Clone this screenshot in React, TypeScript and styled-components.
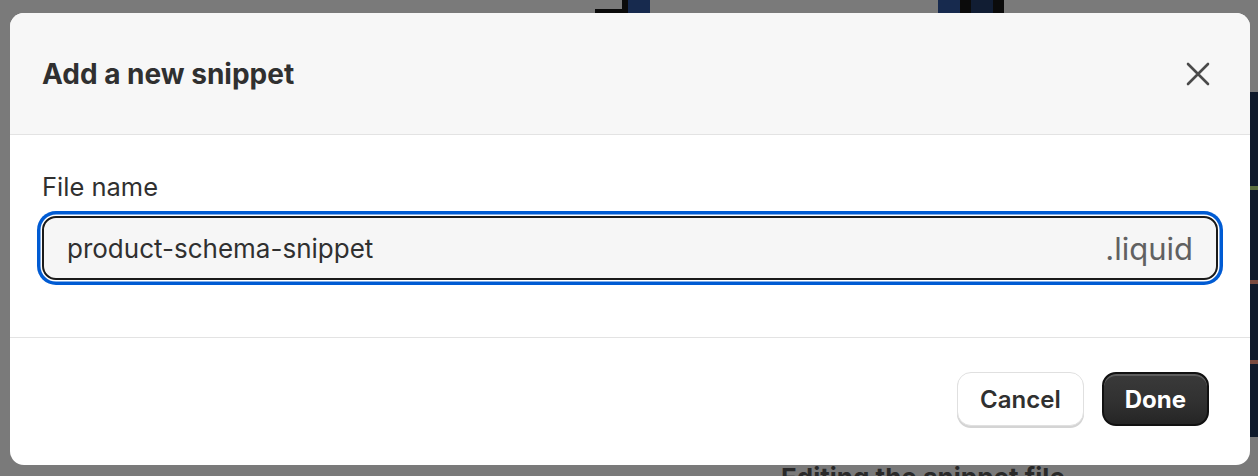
import React from "react";
import styled, { createGlobalStyle } from "styled-components";

const Global = createGlobalStyle`
  html, body { margin: 0; padding: 0; }
  body {
    font-family: Inter, "Noto Sans", "Liberation Sans", sans-serif;
    background: #7a7a7a;
    -webkit-font-smoothing: antialiased;
  }
`;

const Backdrop = styled.div`
  position: relative;
  width: 1258px;
  height: 476px;
  overflow: hidden;
  background: #7a7a7a;
  box-sizing: border-box;
  padding: 13px 8px 11px 10px;
`;

const PageBehind = styled.svg`
  position: absolute;
  inset: 0;
`;

const BackText = styled.div`
  position: absolute;
  left: 781px;
  top: 462px;
  font-size: 26px;
  font-weight: 700;
  color: #1c1c1c;
  white-space: nowrap;
  opacity: 0.85;
`;

const Modal = styled.div`
  position: relative;
  width: 1240px;
  height: 452px;
  background: #ffffff;
  border-radius: 14px;
  overflow: hidden;
  display: flex;
  flex-direction: column;
`;

const Header = styled.div`
  height: 121px;
  background: #f7f7f7;
  border-bottom: 1px solid #e3e3e3;
  display: flex;
  align-items: center;
  justify-content: space-between;
  padding: 0 38px 0 32px;
  flex-shrink: 0;
`;

const Title = styled.h2`
  margin: 0;
  font-size: 28px;
  font-weight: 650;
  color: #303030;
`;

const CloseBtn = styled.button`
  border: 0;
  background: transparent;
  padding: 0;
  width: 28px;
  height: 28px;
  display: flex;
  align-items: center;
  justify-content: center;
  cursor: pointer;
`;

const Body = styled.div`
  padding: 36px 32px 0 32px;
  height: 203px;
  box-sizing: border-box;
  border-bottom: 1px solid #e3e3e3;
  display: flex;
  flex-direction: column;
  flex-shrink: 0;
`;

const Label = styled.label`
  font-size: 25.5px;
  line-height: 32px;
  color: #303030;
  margin-bottom: 13px;
`;

const Field = styled.div`
  height: 64px;
  box-sizing: border-box;
  border: 2px solid #1a1a1a;
  border-radius: 14px;
  background: #f6f6f6;
  box-shadow: 0 0 0 1.5px #ffffff, 0 0 0 5px #005bd3;
  display: flex;
  align-items: center;
  padding: 0 23px 0 23px;
`;

const Value = styled.span`
  flex: 1;
  font-size: 26px;
  color: #303030;
`;

const Suffix = styled.span`
  font-size: 31px;
  color: #616161;
`;

const Footer = styled.div`
  flex: 1;
  display: flex;
  justify-content: flex-end;
  align-items: flex-start;
  gap: 18px;
  padding: 34px 41px 0 0;
`;

const Button = styled.button<{ $primary?: boolean }>`
  height: 54px;
  box-sizing: border-box;
  border-radius: 14px;
  font-family: inherit;
  font-size: 24px;
  font-weight: ${(p) => (p.$primary ? 700 : 600)};
  padding: 0 ${(p) => (p.$primary ? 21 : 22)}px;
  cursor: pointer;
  ${(p) =>
    p.$primary
      ? `
    color: #ffffff;
    background: linear-gradient(180deg, #3a3a3a 0%, #303030 60%, #252525 100%);
    border: 2px solid #111111;
    box-shadow: inset 0 2px 0 rgba(255,255,255,0.18);
  `
      : `
    color: #303030;
    background: #ffffff;
    border: 1px solid #e0e0e0;
    box-shadow: 0 2px 0 #d4d4d4;
  `}
`;

export default function App() {
  return (
    <>
      <Global />
      <Backdrop>
        <PageBehind width="1258" height="476" viewBox="0 0 1258 476">
          <rect x="595" y="9" width="33" height="4" fill="#0b0b0b" />
          <rect x="622" y="0" width="6" height="13" fill="#0b0b0b" />
          <rect x="628" y="0" width="22" height="13" fill="#172a4e" />
          <rect x="938" y="0" width="22" height="13" fill="#172a4e" />
          <rect x="960" y="0" width="11" height="13" fill="#0b0b0b" />
          <rect x="971" y="0" width="22" height="13" fill="#111d33" />
          <rect x="993" y="0" width="11" height="13" fill="#0b0b0b" />
          <rect x="1250" y="92" width="8" height="345" fill="#0f1a2b" />
          <rect x="1250" y="186" width="8" height="4" fill="#5b6e3e" />
          <rect x="1250" y="280" width="8" height="4" fill="#7a4a3e" />
          <rect x="1250" y="360" width="8" height="4" fill="#7a4a3e" />
        </PageBehind>
        <BackText>Editing the snippet file</BackText>
        <Modal>
          <Header>
            <Title>Add a new snippet</Title>
            <CloseBtn aria-label="Close">
              <svg width="24" height="24" viewBox="0 0 24 24" fill="none">
                <path
                  d="M2 2 L22 22 M22 2 L2 22"
                  stroke="#4a4a4a"
                  strokeWidth="2.6"
                  strokeLinecap="round"
                />
              </svg>
            </CloseBtn>
          </Header>
          <Body>
            <Label>File name</Label>
            <Field>
              <Value>product-schema-snippet</Value>
              <Suffix>.liquid</Suffix>
            </Field>
          </Body>
          <Footer>
            <Button>Cancel</Button>
            <Button $primary>Done</Button>
          </Footer>
        </Modal>
      </Backdrop>
    </>
  );
}
